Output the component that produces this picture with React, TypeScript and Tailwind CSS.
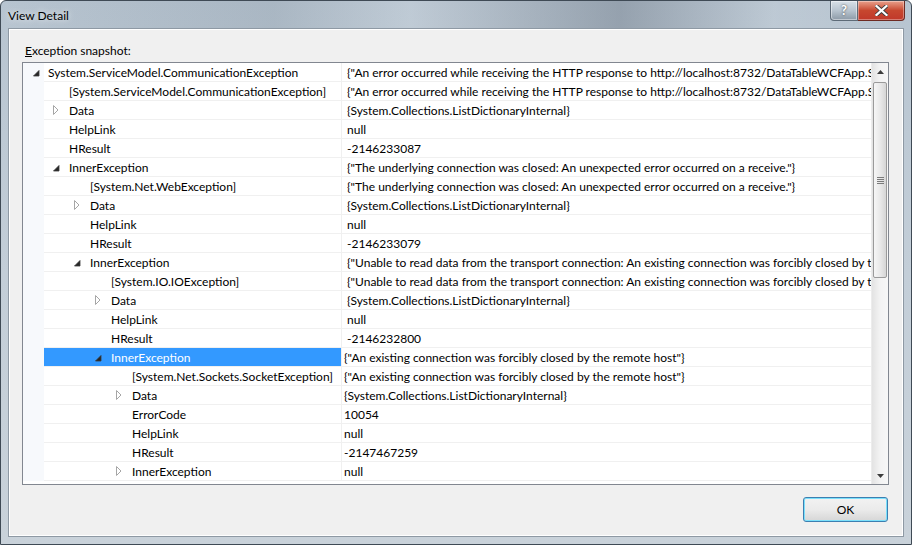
import React from 'react'

type Row = {
  name: string
  value: string
  level: number
  expander?: 'open' | 'closed'
  selected?: boolean
  shift?: boolean
}

const longErr =
  '{"An error occurred while receiving the HTTP response to http://localhost:8732/DataTableWCFApp.Service1/. This could be due to the service endpoint binding not using the HTTP protocol."}'
const readErr =
  '{"Unable to read data from the transport connection: An existing connection was forcibly closed by the remote host."}'
const dict = '{System.Collections.ListDictionaryInternal}'

const rows: Row[] = [
  { name: 'System.ServiceModel.CommunicationException', value: longErr, level: 0, expander: 'open' },
  { name: '[System.ServiceModel.CommunicationException]', value: longErr, level: 1 },
  { name: 'Data', value: dict, level: 1, expander: 'closed' },
  { name: 'HelpLink', value: 'null', level: 1 },
  { name: 'HResult', value: '-2146233087', level: 1 },
  { name: 'InnerException', value: '{"The underlying connection was closed: An unexpected error occurred on a receive."}', level: 1, expander: 'open' },
  { name: '[System.Net.WebException]', value: '{"The underlying connection was closed: An unexpected error occurred on a receive."}', level: 2 },
  { name: 'Data', value: dict, level: 2, expander: 'closed' },
  { name: 'HelpLink', value: 'null', level: 2 },
  { name: 'HResult', value: '-2146233079', level: 2 },
  { name: 'InnerException', value: readErr, level: 2, expander: 'open' },
  { name: '[System.IO.IOException]', value: readErr, level: 3 },
  { name: 'Data', value: dict, level: 3, expander: 'closed' },
  { name: 'HelpLink', value: 'null', level: 3 },
  { name: 'HResult', value: '-2146232800', level: 3 },
  { name: 'InnerException', value: '{"An existing connection was forcibly closed by the remote host"}', level: 3, expander: 'open', selected: true, shift: true },
  { name: '[System.Net.Sockets.SocketException]', value: '{"An existing connection was forcibly closed by the remote host"}', level: 4, shift: true },
  { name: 'Data', value: dict, level: 4, expander: 'closed', shift: true },
  { name: 'ErrorCode', value: '10054', level: 4, shift: true },
  { name: 'HelpLink', value: 'null', level: 4, shift: true },
  { name: 'HResult', value: '-2147467259', level: 4, shift: true },
  { name: 'InnerException', value: 'null', level: 4, expander: 'closed', shift: true },
]

// text start inside the name cell (cell begins at x=44)
const indent = ['pl-[4px]', 'pl-[25px]', 'pl-[46px]', 'pl-[67px]', 'pl-[88px]']
// expander start inside the name cell for levels >= 1
const expIndent = ['', 'pl-[9px]', 'pl-[30px]', 'pl-[51px]', 'pl-[72px]']

function Expander({ kind }: { kind: 'open' | 'closed' }) {
  if (kind === 'open') {
    return (
      <svg width="7" height="7" viewBox="0 0 7 7" className="mt-[2px]">
        <path d="M6 0.5 L6 6 L0.5 6 Z" fill="#262626" stroke="#3a3a3a" strokeWidth="0.8" />
      </svg>
    )
  }
  return (
    <svg width="6" height="10" viewBox="0 0 6 10">
      <path d="M0.5 0.5 L5 5 L0.5 9.5 Z" fill="#fff" stroke="#a6a6a6" strokeWidth="1" />
    </svg>
  )
}

function GridRow({ row }: { row: Row }) {
  const textColor = row.selected ? 'text-white' : 'text-black'
  return (
    <div className="flex h-[19px] shrink-0 min-w-0">
      <div className="w-[21px] shrink-0 bg-[#f7f9fc] flex items-center pl-[10px]">
        {row.level === 0 && row.expander && <Expander kind={row.expander} />}
      </div>
      <div
        className={`relative w-[297px] shrink-0 border-b border-[#f0f0f0] flex items-center ${
          row.selected ? 'bg-[#3399ff]' : 'bg-white'
        }`}
      >
        {row.level > 0 && row.expander && (
          <div className={`absolute inset-y-0 left-0 flex items-center ${expIndent[row.level]}`}>
            <Expander kind={row.expander} />
          </div>
        )}
        <span className={`whitespace-nowrap pt-[1px] ${indent[row.level]} ${textColor}`}>{row.name}</span>
      </div>
      <div className="w-[1px] shrink-0 bg-[#f0f0f0]" />
      <div
        className={`flex-1 min-w-0 overflow-hidden border-b border-[#f0f0f0] bg-white flex items-center ${
          row.shift ? 'pl-[2px]' : 'pl-[5px]'
        }`}
      >
        <span className="whitespace-nowrap pt-[1px]">{row.value}</span>
      </div>
    </div>
  )
}

function ScrollBar() {
  return (
    <div className="w-[17px] shrink-0 flex flex-col bg-gradient-to-r from-[#e3e3e3] via-[#f3f3f3] to-[#f7f7f7] border-l border-[#ececec]">
      <div className="h-[17px] shrink-0 flex items-center justify-center">
        <svg width="7" height="4" viewBox="0 0 7 4">
          <path d="M0 4 L3.5 0 L7 4 Z" fill="#3c3c3c" />
        </svg>
      </div>
      <div className="mt-[2px] mx-[1px] h-[196px] shrink-0 rounded-[2px] border border-[#9a9a9a] bg-gradient-to-r from-[#f6f6f6] via-[#e9e9e9] to-[#d6d6d6] flex items-center justify-center">
        <div className="flex flex-col gap-[1px]">
          <div className="w-[7px] h-[1px] bg-[#7a7a7a]" />
          <div className="w-[7px] h-[1px] bg-[#7a7a7a]" />
          <div className="w-[7px] h-[1px] bg-[#7a7a7a]" />
          <div className="w-[7px] h-[1px] bg-[#7a7a7a]" />
        </div>
      </div>
      <div className="flex-1" />
      <div className="h-[17px] shrink-0 flex items-center justify-center">
        <svg width="7" height="4" viewBox="0 0 7 4">
          <path d="M0 0 L3.5 4 L7 0 Z" fill="#3c3c3c" />
        </svg>
      </div>
    </div>
  )
}

function CaptionButtons() {
  return (
    <div className="flex h-[20px] shrink-0 self-start">
      <div className="w-[28px] h-[20px] rounded-bl-[4px] border border-t-0 border-[#5e6b78] bg-gradient-to-b from-[#d9e1e8] via-[#b8c4cf] to-[#8d9aa7] flex items-center justify-center shadow-[inset_0_0_0_1px_rgba(255,255,255,0.45)]">
        <span className="text-white font-bold text-[13px] leading-none [text-shadow:0_0_2px_#333]">?</span>
      </div>
      <div className="w-[47px] h-[20px] rounded-br-[4px] border border-t-0 border-l-0 border-[#6e2a22] bg-gradient-to-b from-[#e8a08c] via-[#c7472f] to-[#c0382a] flex items-center justify-center shadow-[inset_0_0_0_1px_rgba(255,255,255,0.35)]">
        <svg width="13" height="11" viewBox="0 0 13 11">
          <path d="M1.5 1 L11.5 10 M11.5 1 L1.5 10" stroke="#3b3b3b" strokeWidth="4" strokeLinecap="square" />
          <path d="M1.5 1 L11.5 10 M11.5 1 L1.5 10" stroke="#ffffff" strokeWidth="2.2" strokeLinecap="square" />
        </svg>
      </div>
    </div>
  )
}

export default function App() {
  return (
    <div className="w-[912px] h-[545px] overflow-hidden bg-white font-['Segoe_UI','Lato',sans-serif] text-[12px] text-black">
      <div className="w-full h-full flex flex-col rounded-t-[6px] border border-[#3f4a55] bg-gradient-to-b from-[#b7c4d0] via-[#c3ced8] to-[#c9d2da]">
        <div className="h-[27px] shrink-0 flex items-start justify-between pl-[7px] pr-[6px] bg-[linear-gradient(90deg,rgba(255,255,255,0)_0%,rgba(70,85,100,0.12)_30%,rgba(255,255,255,0.1)_45%,rgba(60,70,85,0.28)_68%,rgba(255,255,255,0.08)_85%,rgba(0,0,0,0)_100%)]">
          <span className="pt-[6px] text-[12px] text-black [text-shadow:0_0_6px_rgba(255,255,255,0.9)]">View Detail</span>
          <CaptionButtons />
        </div>
        <div className="flex-1 min-h-0 min-w-0 px-[7px] pb-[7px] flex">
          <div className="flex-1 min-w-0 flex flex-col border border-[#8e99a4] bg-[#f0f0f0] shadow-[inset_0_0_0_1px_#ffffff]">
            <div className="h-[33px] shrink-0 pl-[16px] pt-[13px]">
              <span>
                <span className="underline">E</span>xception snapshot:
              </span>
            </div>
            <div className="ml-[13px] mr-[14px] h-[423px] min-w-0 shrink-0 border border-[#828790] bg-white flex overflow-hidden">
              <div className="flex-1 min-w-0 flex flex-col overflow-hidden">
                {rows.map((r, i) => (
                  <GridRow key={i} row={r} />
                ))}
              </div>
              <ScrollBar />
            </div>
            <div className="flex-1 flex justify-end items-start pt-[12px] pr-[15px]">
              <button className="w-[85px] h-[25px] rounded-[3px] border border-[#3c7fb1] bg-gradient-to-b from-[#f2f2f2] via-[#ebebeb] to-[#d6d6d6] shadow-[inset_0_0_0_1px_#7be0fb] text-[12px]">
                OK
              </button>
            </div>
          </div>
        </div>
      </div>
    </div>
  )
}
